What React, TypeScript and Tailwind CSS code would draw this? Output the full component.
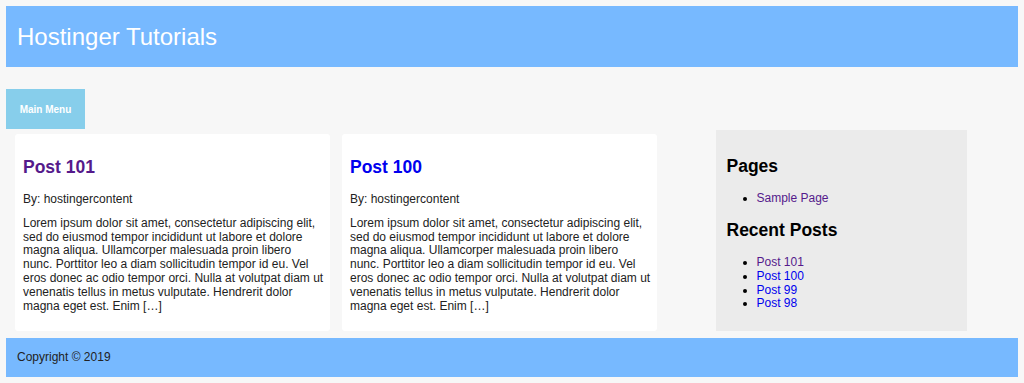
import React from "react"

const LOREM =
  "Lorem ipsum dolor sit amet, consectetur adipiscing elit, sed do eiusmod tempor incididunt ut labore et dolore magna aliqua. Ullamcorper malesuada proin libero nunc. Porttitor leo a diam sollicitudin tempor id eu. Vel eros donec ac odio tempor orci. Nulla at volutpat diam ut venenatis tellus in metus vulputate. Hendrerit dolor magna eget est. Enim [\u2026]"

const POSTS = [
  { title: "Post 101", visited: true },
  { title: "Post 100", visited: false },
]

const RECENT = [
  { title: "Post 101", visited: true },
  { title: "Post 100", visited: false },
  { title: "Post 99", visited: false },
  { title: "Post 98", visited: false },
]

function PostCard({ title, visited }: { title: string; visited: boolean }) {
  return (
    <article className="w-[315px] h-[197px] bg-white rounded-[3px] pl-[8px] pr-[6.5px] pt-[23px]">
      <h2
        className={`text-[17.5px] leading-[21px] font-bold ${visited ? "text-[#551a8b]" : "text-[#0000ee]"}`}
      >
        {title}
      </h2>
      <p className="mt-[15px] text-[12px] leading-[13.8px]">By: hostingercontent</p>
      <p className="mt-[10px] text-[12px] leading-[13.8px]">{LOREM}</p>
    </article>
  )
}

export default function App() {
  return (
    <div className="min-h-screen bg-[#f7f7f7] px-[6px] pt-[6px] pb-[6px] text-[#222] font-['Liberation_Sans',Arial,sans-serif]">
      <header className="h-[61px] bg-[#77b9ff] pl-[11px] flex items-center">
        <h1 className="text-[24px] text-white">Hostinger Tutorials</h1>
      </header>

      <nav className="mt-[22px]">
        <button className="w-[79px] h-[40px] bg-[#87ceeb] text-white text-[10px] font-bold">
          Main Menu
        </button>
      </nav>

      <div className="mt-[1px] flex items-start">
        <main className="flex gap-[12px] pl-[9px] pt-[4px]">
          {POSTS.map((p) => (
            <PostCard key={p.title} title={p.title} visited={p.visited} />
          ))}
        </main>

        <aside className="ml-[59px] w-[251px] h-[201px] bg-[#ebebeb] px-[10.5px] pt-[26px]">
          <h2 className="text-[17.5px] leading-[21px] font-bold text-black">Pages</h2>
          <ul className="mt-[14.5px] list-disc pl-[30px] text-[12px] leading-[13.8px]">
            <li className="marker:text-black">
              <span className="text-[#551a8b]">Sample Page</span>
            </li>
          </ul>
          <h2 className="mt-[15px] text-[17.5px] leading-[21px] font-bold text-black">Recent Posts</h2>
          <ul className="mt-[15px] list-disc pl-[30px] text-[12px] leading-[13.7px]">
            {RECENT.map((r) => (
              <li key={r.title} className="marker:text-black">
                <span className={r.visited ? "text-[#551a8b]" : "text-[#0000ee]"}>{r.title}</span>
              </li>
            ))}
          </ul>
        </aside>
      </div>

      <footer className="mt-[7px] h-[39px] bg-[#77b9ff] pl-[11px] pt-[13px] text-[12px] leading-[13.8px]">
        Copyright © 2019
      </footer>
    </div>
  )
}
